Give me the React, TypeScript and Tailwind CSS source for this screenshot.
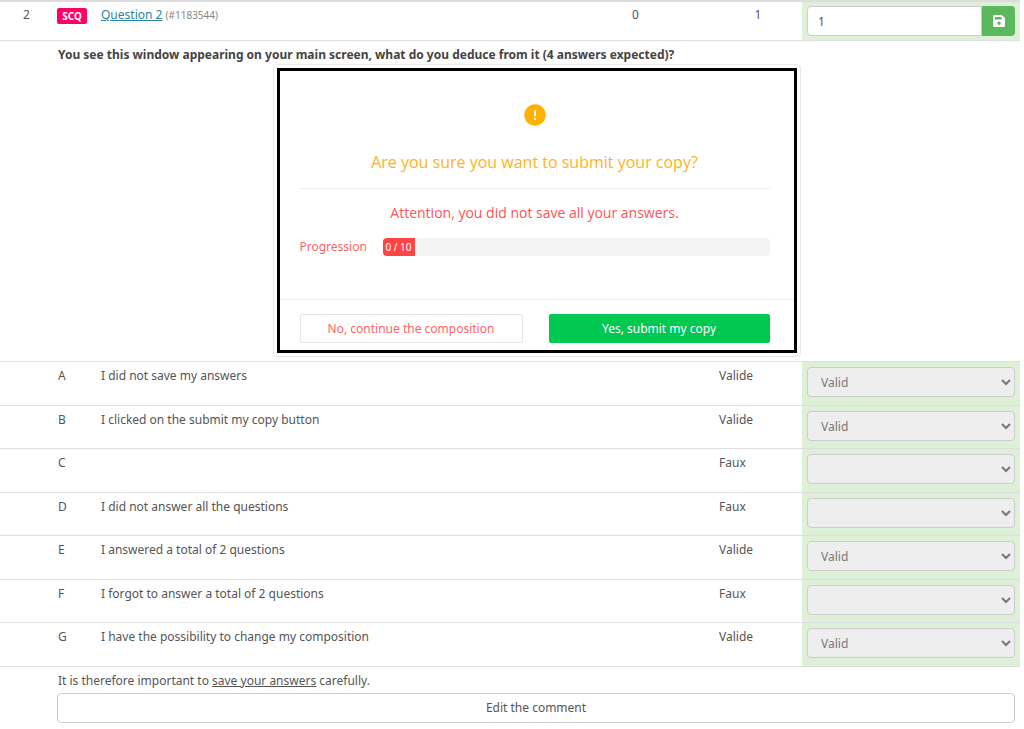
import React, { useState } from 'react';

type Answer = {
  letter: string;
  text: string;
  result: 'Valide' | 'Faux';
};

const answers: Answer[] = [
  { letter: 'A', text: 'I did not save my answers', result: 'Valide' },
  { letter: 'B', text: 'I clicked on the submit my copy button', result: 'Valide' },
  { letter: 'C', text: '', result: 'Faux' },
  { letter: 'D', text: 'I did not answer all the questions', result: 'Faux' },
  { letter: 'E', text: 'I answered a total of 2 questions', result: 'Valide' },
  { letter: 'F', text: 'I forgot to answer a total of 2 questions', result: 'Faux' },
  { letter: 'G', text: 'I have the possibility to change my composition', result: 'Valide' },
];

const SaveIcon = () => (
  <svg viewBox="0 0 12 12" className="w-3 h-3" aria-hidden="true">
    <path
      fill="currentColor"
      fillRule="evenodd"
      d="M1.5 0h7.2L12 3.1v7.4c0 .8-.7 1.5-1.5 1.5h-9C.7 12 0 11.3 0 10.5v-9C0 .7.7 0 1.5 0zM2 2v2.6h6.6V2zM6 6.6a1.7 1.7 0 1 0 0 3.4 1.7 1.7 0 0 0 0-3.4z"
    />
  </svg>
);

const WarningIcon = () => (
  <svg viewBox="0 0 22 22" className="w-[22px] h-[22px]" aria-hidden="true">
    <circle cx="11" cy="11" r="10.7" fill="#ffb000" />
    <rect x="10" y="6" width="2" height="6.2" rx="0.5" fill="#fff" />
    <rect x="10" y="13.8" width="2" height="2.1" rx="0.5" fill="#fff" />
  </svg>
);

const SubmitWindow = () => (
  <div className="w-[528px] max-w-full mx-auto p-[3px] border border-[#e8e8e8] rounded">
    <div className="border-3 border-black">
      <div className="pl-5 pr-6 pt-[33px] pb-[43px]">
        <div className="flex justify-center">
          <WarningIcon />
        </div>
        <h2 className="mt-6 pb-[14px] text-center font-['Open_Sans',sans-serif] text-base leading-6 font-medium text-[#ffb31a] border-b border-[#eee]">
          Are you sure you want to submit your copy?
        </h2>
        <p className="mt-[14px] text-center font-['Open_Sans',sans-serif] text-sm leading-5 font-medium text-[#ff5252]">
          Attention, you did not save all your answers.
        </p>
        <div className="mt-[15px] flex items-center text-[#ff6464]">
          <span id="progression" className="w-[83px]">Progression</span>
          <div
            role="progressbar"
            aria-labelledby="progression"
            aria-valuenow={0}
            aria-valuemax={10}
            className="flex-1 h-[18px] rounded bg-[#f4f4f4] overflow-hidden"
          >
            <div className="w-8 h-full bg-[#ff4444] text-white text-center text-[10px] leading-[18px] whitespace-nowrap">
              0 / 10
            </div>
          </div>
        </div>
      </div>
      <div className="pl-5 pr-6 pt-[14px] pb-[7px] flex gap-[26px] border-t border-[#eee]">
        <button className="flex-1 h-[29px] border border-[#e6e6e6] rounded-xs text-[#ff6464]">
          No, continue the composition
        </button>
        <button className="flex-1 h-[29px] rounded-xs bg-[#00c851] text-white">
          Yes, submit my copy
        </button>
      </div>
    </div>
  </div>
);

const AnswerRow = ({ letter, text, result }: Answer) => (
  <tr className="h-11 even:h-[43px] border-b border-[#ddd]">
    <td />
    <td className="px-[5px] pt-[5px]">{letter}</td>
    <td className="px-[5px] pt-[5px]">{text}</td>
    <td />
    <td className="px-[5px] pt-[5px]">{result}</td>
    <td className="px-[5px] pt-[5px] bg-[#dff0d8]">
      <select
        disabled
        aria-label={`Result for answer ${letter}`}
        defaultValue={result === 'Valide' ? 'valid' : ''}
        className="block w-full h-[30px] pl-[9px] border border-[#ccc] rounded bg-[#eee] text-[#777] opacity-100"
      >
        <option value="" />
        <option value="valid">Valid</option>
      </select>
    </td>
  </tr>
);

const App = () => {
  const [score, setScore] = useState('1');

  return (
    <div className="min-h-screen bg-white pr-1 font-['Noto_Sans',sans-serif] text-[12px] leading-[18px] text-[#555]">
      <table className="w-full table-fixed border-collapse border-t-2 border-[#ddd] [&_td]:align-top">
        <colgroup>
          <col className="w-[53px]" />
          <col className="w-[43px]" />
          <col />
          <col className="w-[157px]" />
          <col className="w-[88px]" />
          <col className="w-[218px]" />
        </colgroup>

        {/* Question */}
        <tbody>
          <tr className="border-b border-[#ddd]">
            <td className="pt-1 text-center">2</td>
            <td className="pl-1 pt-[6px]">
              <span className="block w-[30px] h-4 rounded-xs bg-[#ff0066] text-center text-[10px] leading-4 font-bold text-white">
                SCQ
              </span>
            </td>
            <td className="px-[5px] pt-1">
              <a href="#question-2" className="text-[#2a85a0] underline">Question 2</a>{' '}
              <span className="text-[10px] text-[#888]">(#1183544)</span>
            </td>
            <td className="pt-1 text-center">0</td>
            <td className="pt-1 text-center">1</td>
            <td className="px-[5px] py-1 bg-[#dff0d8]">
              <div className="flex">
                <input
                  type="text"
                  aria-label="Score"
                  value={score}
                  onChange={e => setScore(e.target.value)}
                  className="flex-1 min-w-0 h-[30px] pl-[10px] border border-[#ccc] rounded-l bg-white"
                />
                <button
                  aria-label="Save score"
                  className="w-[33px] h-[30px] flex items-center justify-center rounded-r bg-[#5cb85c] text-white"
                >
                  <SaveIcon />
                </button>
              </div>
            </td>
          </tr>
          <tr className="border-b border-[#ddd]">
            <td />
            <td colSpan={5} className="px-[5px] pt-[5px] pb-1">
              <p className="font-bold text-[#444]">
                You see this window appearing on your main screen, what do you deduce from it (4 answers expected)?
              </p>
              <SubmitWindow />
            </td>
          </tr>
        </tbody>

        {/* Answers */}
        <tbody>
          {answers.map(answer => (
            <AnswerRow key={answer.letter} {...answer} />
          ))}
        </tbody>

        {/* Comment */}
        <tbody>
          <tr>
            <td />
            <td colSpan={5} className="pl-1 pr-[5px] pt-[5px]">
              <p className="pl-px">
                It is therefore important to <span className="underline">save your answers</span> carefully.
              </p>
              <button className="mt-[3px] w-full h-[30px] border border-[#ccc] rounded bg-white">
                Edit the comment
              </button>
            </td>
          </tr>
        </tbody>
      </table>
    </div>
  );
};

export default App;
